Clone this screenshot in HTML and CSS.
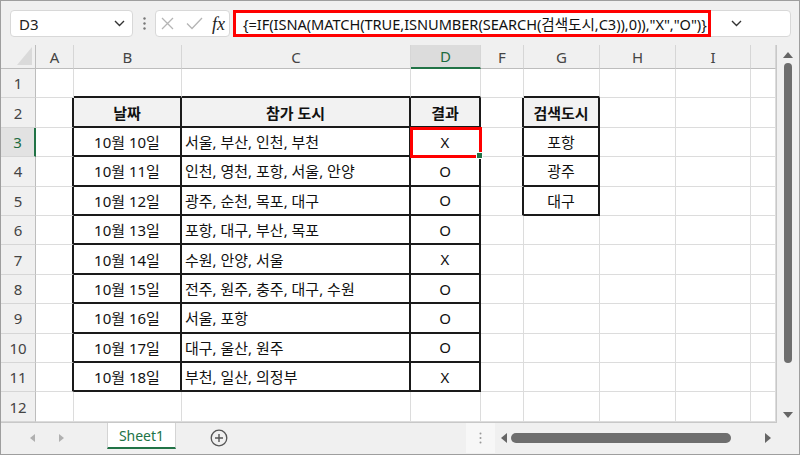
FILE: index.html
```html
<!DOCTYPE html>
<html lang="ko">
<head>
<meta charset="utf-8">
<title>Excel</title>
<link rel="stylesheet" href="styles.css">
</head>
<body>
<div class="app">
  <div class="fbar">
    <div class="namebox"><span>D3</span>
      <svg width="11" height="7" viewBox="0 0 11 7"><polyline points="1,1 5.5,5.5 10,1" fill="none" stroke="#333" stroke-width="1.4"/></svg>
    </div>
    <div class="dots">
      <svg width="3" height="13" viewBox="0 0 3 13"><circle cx="1.5" cy="1.5" r="1.2" fill="#777"/><circle cx="1.5" cy="6.5" r="1.2" fill="#777"/><circle cx="1.5" cy="11.5" r="1.2" fill="#777"/></svg>
    </div>
    <div class="fxbox">
      <svg class="ix" width="13" height="13" viewBox="0 0 13 13"><path d="M1 1L12 12M12 1L1 12" stroke="#b5b5b5" stroke-width="1.3" fill="none"/></svg>
      <svg class="ic" width="17" height="13" viewBox="0 0 17 13"><polyline points="1,6.5 6,11.5 16,1" fill="none" stroke="#b5b5b5" stroke-width="1.3"/></svg>
      <span class="fx">fx</span>
    </div>
    <div class="finput">
      <span class="hl">{=IF(ISNA(MATCH(TRUE,ISNUMBER(SEARCH(검색도시,C3)),0)),"X","O")}</span>
      <svg class="fchev" width="11" height="7" viewBox="0 0 11 7"><polyline points="1,1 5.5,5.5 10,1" fill="none" stroke="#333" stroke-width="1.4"/></svg>
    </div>
  </div>

  <div class="main">
    <div class="sheet">
      <!-- header row -->
      <div class="corner"><svg width="15" height="18" viewBox="0 0 15 18"><polygon points="15,0 15,18 0,18" fill="#dadada"/></svg></div>
      <div class="ch">A</div><div class="ch">B</div><div class="ch">C</div><div class="ch act">D</div><div class="ch">F</div><div class="ch">G</div><div class="ch">H</div><div class="ch">I</div><div class="ch"></div>

      <!-- row 1 -->
      <div class="rh">1</div><div class="c"></div><div class="c bb"></div><div class="c bb"></div><div class="c bb"></div><div class="c"></div><div class="c bb"></div><div class="c"></div><div class="c"></div><div class="c"></div>
      <!-- row 2 -->
      <div class="rh">2</div><div class="c br"></div><div class="c t th">날짜</div><div class="c t th">참가 도시</div><div class="c t th">결과</div><div class="c br"></div><div class="c t th">검색도시</div><div class="c"></div><div class="c"></div><div class="c"></div>
      <!-- row 3 -->
      <div class="rh act">3</div><div class="c br"></div><div class="c t">10월 10일</div><div class="c t lt">서울, 부산, 인천, 부천</div><div class="c t sel">X</div><div class="c br"></div><div class="c t">포항</div><div class="c"></div><div class="c"></div><div class="c"></div>
      <!-- row 4 -->
      <div class="rh">4</div><div class="c br"></div><div class="c t">10월 11일</div><div class="c t lt">인천, 영천, 포항, 서울, 안양</div><div class="c t">O</div><div class="c br"></div><div class="c t">광주</div><div class="c"></div><div class="c"></div><div class="c"></div>
      <!-- row 5 -->
      <div class="rh">5</div><div class="c br"></div><div class="c t">10월 12일</div><div class="c t lt">광주, 순천, 목포, 대구</div><div class="c t">O</div><div class="c br"></div><div class="c t">대구</div><div class="c"></div><div class="c"></div><div class="c"></div>
      <!-- row 6 -->
      <div class="rh">6</div><div class="c br"></div><div class="c t">10월 13일</div><div class="c t lt">포항, 대구, 부산, 목포</div><div class="c t">O</div><div class="c"></div><div class="c"></div><div class="c"></div><div class="c"></div><div class="c"></div>
      <!-- row 7 -->
      <div class="rh">7</div><div class="c br"></div><div class="c t">10월 14일</div><div class="c t lt">수원, 안양, 서울</div><div class="c t">X</div><div class="c"></div><div class="c"></div><div class="c"></div><div class="c"></div><div class="c"></div>
      <!-- row 8 -->
      <div class="rh">8</div><div class="c br"></div><div class="c t">10월 15일</div><div class="c t lt">전주, 원주, 충주, 대구, 수원</div><div class="c t">O</div><div class="c"></div><div class="c"></div><div class="c"></div><div class="c"></div><div class="c"></div>
      <!-- row 9 -->
      <div class="rh">9</div><div class="c br"></div><div class="c t">10월 16일</div><div class="c t lt">서울, 포항</div><div class="c t">O</div><div class="c"></div><div class="c"></div><div class="c"></div><div class="c"></div><div class="c"></div>
      <!-- row 10 -->
      <div class="rh">10</div><div class="c br"></div><div class="c t">10월 17일</div><div class="c t lt">대구, 울산, 원주</div><div class="c t">O</div><div class="c"></div><div class="c"></div><div class="c"></div><div class="c"></div><div class="c"></div>
      <!-- row 11 -->
      <div class="rh">11</div><div class="c br"></div><div class="c t">10월 18일</div><div class="c t lt">부천, 일산, 의정부</div><div class="c t">X</div><div class="c"></div><div class="c"></div><div class="c"></div><div class="c"></div><div class="c"></div>
      <!-- row 12 -->
      <div class="rh">12</div><div class="c"></div><div class="c"></div><div class="c"></div><div class="c"></div><div class="c"></div><div class="c"></div><div class="c"></div><div class="c"></div><div class="c"></div>
    </div>
    <div class="vscroll">
      <svg class="arr-up" width="10" height="6" viewBox="0 0 10 6"><polygon points="5,0 10,6 0,6" fill="#666"/></svg>
      <div class="vthumb"></div>
      <div class="vspace"></div>
      <svg class="arr-down" width="10" height="6" viewBox="0 0 10 6"><polygon points="0,0 10,0 5,6" fill="#666"/></svg>
    </div>
  </div>

  <div class="tabbar">
    <div class="nav">
      <svg width="5" height="8" viewBox="0 0 5 8"><polygon points="5,0 5,8 0,4" fill="#b0b0b0"/></svg>
      <svg width="5" height="8" viewBox="0 0 5 8"><polygon points="0,0 0,8 5,4" fill="#b0b0b0"/></svg>
    </div>
    <div class="tab">Sheet1</div>
    <div class="add">
      <svg width="18" height="18" viewBox="0 0 18 18"><circle cx="9" cy="9" r="7.8" fill="none" stroke="#555" stroke-width="1.3"/><path d="M9 5V13M5 9H13" stroke="#555" stroke-width="1.4"/></svg>
    </div>
    <div class="hs">
      <div class="grip">
        <svg width="3" height="12" viewBox="0 0 3 12"><circle cx="1.5" cy="1.5" r="1" fill="#999"/><circle cx="1.5" cy="6" r="1" fill="#999"/><circle cx="1.5" cy="10.5" r="1" fill="#999"/></svg>
      </div>
      <svg class="harr-l" width="6" height="10" viewBox="0 0 6 10"><polygon points="6,0 6,10 0,5" fill="#666"/></svg>
      <div class="hthumb"></div>
      <svg class="harr-r" width="6" height="10" viewBox="0 0 6 10"><polygon points="0,0 0,10 6,5" fill="#666"/></svg>
    </div>
  </div>
</div>
</body>
</html>
```
FILE: styles.css
```css
* { box-sizing: border-box; margin: 0; padding: 0; }
body { margin: 0; background: #fff; font-family: "Noto Sans", "Noto Sans CJK KR", sans-serif; }

.app {
  width: 800px; height: 455px;
  border: 1px solid #9e9e9e;
  background: #f0f0f0;
  display: flex; flex-direction: column;
  overflow: hidden;
}

/* formula bar */
.fbar { height: 44px; flex: none; display: flex; align-items: flex-start; padding: 9px 8px 0 9px; }
.namebox {
  width: 123px; height: 27px; background: #fff;
  border: 1px solid #d8d8d8; border-radius: 4px;
  display: flex; align-items: center; justify-content: space-between;
  padding: 0 7px 0 8px; font-size: 15px; color: #222;
}
.dots { width: 22px; height: 27px; display: flex; align-items: center; justify-content: center; }
.fxbox {
  width: 75px; height: 27px; background: #fff;
  border: 1px solid #d8d8d8; border-radius: 4px;
  display: flex; align-items: center; padding: 0 0 0 5px;
}
.ic { margin-left: 12px; }
.fx { margin-left: 9px; font-family: "Liberation Serif", serif; font-style: italic; font-size: 18px; color: #222; line-height: 1; }
.finput {
  flex: 1; margin-left: 3px; height: 27px; background: #fff;
  border: 1px solid #d8d8d8; border-radius: 4px;
  display: flex; align-items: center;
}
.hl {
  width: 478px; height: 27px; margin: 0 0 0 -1px;
  border: 3px solid #f00; padding-left: 7px;
  display: flex; align-items: center; white-space: nowrap;
  font-size: 14.6px; color: #111; letter-spacing: -0.05px;
}
.fchev { margin-left: 20px; }

/* sheet */
.main { height: 378px; flex: none; display: flex; }
.sheet {
  width: 776px; flex: none;
  display: grid;
  grid-template-columns: 35px 38px 108px 229px 70px 43px 76px 76px 75px 25px;
  grid-template-rows: 24px repeat(12, 29.42px);
  border-right: 1px solid #c8c8c8; border-bottom: 1px solid #c8c8c8;
  background: #fff;
}
.corner {
  background: #f0f0f0; border-right: 1px solid #bdbdbd; border-bottom: 1px solid #bdbdbd;
  display: flex; align-items: flex-end; justify-content: flex-end; padding: 0 3px 3px 0;
}
.ch {
  background: #f0f0f0; border-right: 1px solid #d6d6d6; border-bottom: 1px solid #bdbdbd;
  display: flex; align-items: center; justify-content: center;
  font-size: 15px; color: #444;
}
.ch.act { background: #dcdcdc; color: #1e6b40; border-bottom: 2px solid #217346; }
.rh {
  background: #f0f0f0; border-right: 1px solid #bdbdbd; border-bottom: 1px solid #d6d6d6;
  display: flex; align-items: center; justify-content: center;
  font-size: 15px; color: #444;
}
.rh.act { background: #e2e2e2; color: #1e6b40; border-right: 2px solid #217346; }
.c {
  border-right: 1px solid #dcdcdc; border-bottom: 1px solid #dcdcdc;
  display: flex; align-items: center; justify-content: center;
  white-space: nowrap; overflow: visible;
  font-size: 15px; color: #111;
}
.bb { border-bottom: 2px solid #1a1a1a; }
.br { border-right: 2px solid #1a1a1a; }
.t { border-right: 2px solid #1a1a1a; border-bottom: 2px solid #1a1a1a; }
.th { background: #f2f2f2; font-weight: bold; }
.lt { justify-content: flex-start; padding-left: 3px; }
.sel { position: relative; z-index: 1; outline: 3px solid #f00; outline-offset: -2px; }
.sel::after {
  content: ""; position: absolute; right: -4px; bottom: -4px;
  width: 5px; height: 5px; background: #217346; border: 1px solid #fff;
}

/* vertical scroll */
.vscroll { flex: 1; display: flex; flex-direction: column; align-items: center; padding: 7px 0 5px; }
.vthumb { width: 8px; height: 300px; margin-top: 5px; background: #6e6e6e; border-radius: 4px; }
.vspace { flex: 1; }

/* tab bar */
.tabbar { flex: 1; display: flex; align-items: flex-start; }
.nav { width: 106px; height: 29px; display: flex; align-items: center; padding-left: 29px; gap: 24px; }
.tab {
  width: 69px; height: 26px; background: #fff;
  border-left: 1px solid #d4d4d4; border-right: 1px solid #d4d4d4; border-bottom: 2px solid #217346;
  display: flex; align-items: center; justify-content: center;
  font-size: 14px; color: #217346;
}
.add { margin-left: 34px; height: 29px; display: flex; align-items: center; }
.hs { margin-left: auto; width: 333px; height: 30px; display: flex; align-items: center; }
.grip { width: 29px; height: 30px; background: #f7f7f7; display: flex; align-items: center; justify-content: center; }
.harr-l { margin-left: 6px; }
.hthumb { width: 220px; height: 10px; margin-left: 4px; background: #6e6e6e; border-radius: 5px; }
.harr-r { margin-left: 34px; }
```
